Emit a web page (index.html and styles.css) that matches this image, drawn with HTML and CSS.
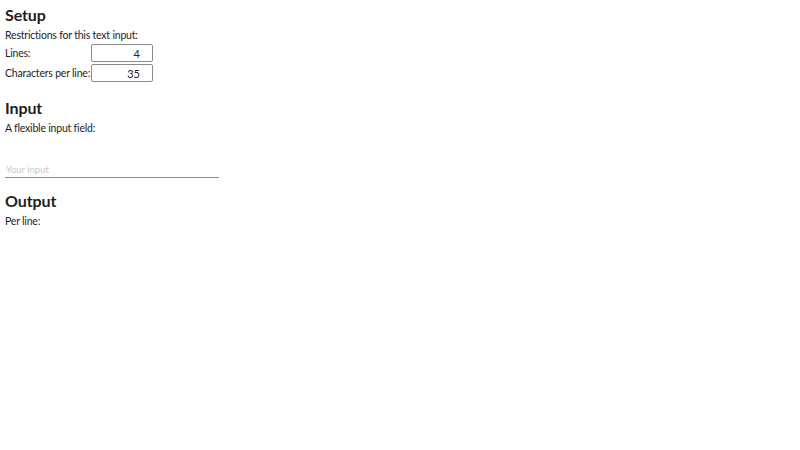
FILE: index.html
```html
<!DOCTYPE html>
<html>
<head>
<meta charset="utf-8">
<link rel="stylesheet" href="styles.css">
</head>
<body>
<section class="sec">
  <h2 class="title">Setup</h2>
  <p class="txt">Restrictions for this text input:</p>
  <div class="grid">
    <label class="lbl">Lines:</label>
    <input class="num" type="text" value="4">
    <label class="lbl">Characters per line:</label>
    <input class="num" type="text" value="35">
  </div>
</section>
<section class="sec">
  <h2 class="title">Input</h2>
  <p class="txt">A flexible input field:</p>
  <input class="flex-in" type="text" placeholder="Your input">
</section>
<section class="sec">
  <h2 class="title">Output</h2>
  <p class="txt">Per line:</p>
</section>
</body>
</html>
```
FILE: styles.css
```css
body {
  margin: 5px;
  font-family: Lato, "Open Sans", sans-serif;
  font-size: 10.5px;
  letter-spacing: -0.2px;
  color: #1e1e1e;
  background: #fff;
}
.sec { margin: 0; }
.title {
  font-size: 16px;
  font-weight: 700;
  letter-spacing: -0.1px;
  margin: 0 0 2px 0;
  line-height: 20px;
}
.sec:nth-child(2) .title { margin-top: 16px; }
.sec:nth-child(3) .title { margin-top: 13px; }
.txt {
  margin: 0;
  line-height: 17px;
}
.grid {
  display: grid;
  grid-template-columns: 86px 62px;
  row-gap: 2px;
  align-items: center;
  justify-content: start;
}
.lbl { line-height: 18px; white-space: nowrap; }
.num {
  box-sizing: border-box;
  width: 62px;
  height: 18px;
  margin: 0;
  border: 1px solid #8a8a8a;
  border-radius: 2px;
  font-family: inherit;
  font-size: 11px;
  letter-spacing: 0;
  text-align: right;
  padding: 0 12px 0 2px;
  color: #1e1e1e;
}
.flex-in {
  display: block;
  box-sizing: border-box;
  width: 214px;
  height: 20px;
  margin: 21px 0 0 0;
  border: none;
  border-bottom: 1px solid #8a8a8a;
  padding: 4px 1px 0 1px;
  font-family: inherit;
  font-size: 9.5px;
  outline: none;
}
.flex-in::placeholder { color: #c8c8c8; }
```
